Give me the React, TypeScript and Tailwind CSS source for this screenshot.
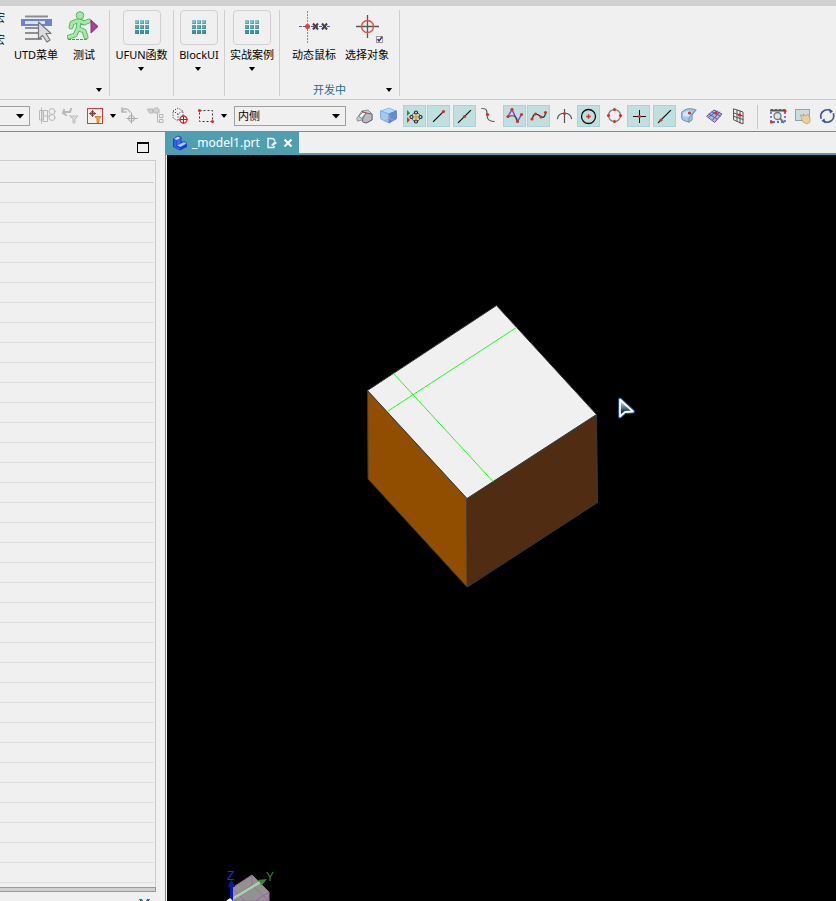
import type { ReactNode } from "react";

function Caret() {
  return (
    <svg width="7" height="4" viewBox="0 0 7 4" className="shrink-0" aria-hidden="true">
      <path d="M0 0h6L3.5 3.5h-1z" fill="#000" />
    </svg>
  );
}

function RibbonTool({ label, children }: { label: string; children: ReactNode }) {
  return (
    <button type="button" className="flex w-12 flex-col items-center">
      <span className="flex h-[37px] w-9 items-start justify-center">{children}</span>
      <span className="text-[11px] leading-4 whitespace-nowrap">{label}</span>
    </button>
  );
}

function RibbonMenu({ label }: { label: string }) {
  return (
    <button type="button" className="flex flex-col items-center">
      <span className="mb-[2px] flex h-[35px] w-[38px] items-center justify-center rounded border border-[#d0d0d0]">
        <GridIcon />
      </span>
      <span className="text-[11px] leading-4 whitespace-nowrap">{label}</span>
      <span className="flex h-3 items-center">
        <Caret />
      </span>
    </button>
  );
}

function GridIcon() {
  const rows = [
    { y: 0, c: "#7fc3ca" },
    { y: 5, c: "#5aa9b2" },
    { y: 10, c: "#45939e" },
  ];
  return (
    <svg width="14" height="15" viewBox="0 0 14 15" aria-hidden="true">
      {rows.map((r) =>
        [0, 5, 10].map((x) => (
          <g key={`${x}-${r.y}`}>
            <rect x={x} y={r.y} width="4" height="4" fill={r.c} />
            <path d={`M${x + 3.5} ${r.y + 1}v2.5h-3`} stroke="#2f7884" fill="none" opacity=".5" />
          </g>
        )),
      )}
    </svg>
  );
}

function MenuCursorIcon() {
  return (
    <svg width="34" height="34" viewBox="0 0 34 34" aria-hidden="true">
      <path d="M6 6.500h23M6 18h14M6 23h14M6 29h17" stroke="#8e8e92" strokeWidth="2" />
      <rect x="2" y="9" width="31" height="7" fill="#6d82d6" />
      <rect x="6" y="11" width="20" height="3" fill="#dfe4f6" />
      <path d="M19.500 12v17l4-3.500 4.500 6.500 3-2-4-6.500h5z" fill="#dcdcdc" stroke="#77777c" strokeWidth="1.200" strokeLinejoin="round" />
    </svg>
  );
}

function RunnerIcon() {
  const limbs = "M13 11L12 19M11 11L6 13 5 17M14 11L18 13 23 11M13 19L18 21 20 27M12 19L9 25 3 27";
  return (
    <svg width="34" height="32" viewBox="1 0 34 32" fill="none" aria-hidden="true">
      <path d="M2 29.500h20" stroke="#777" strokeDasharray="3 1" />
      <g strokeLinecap="round" strokeLinejoin="round">
        <path d={limbs} stroke="#55b866" strokeWidth="5" />
        <path d={limbs} stroke="#a4e9aa" strokeWidth="3" />
      </g>
      <circle cx="14" cy="5.500" r="3.800" fill="#a4e9aa" stroke="#55b866" />
      <path d="M25 10v13l7-6.500z" fill="#b33aa0" stroke="#7d3585" />
    </svg>
  );
}

function MouseIcon() {
  return (
    <svg width="34" height="34" viewBox="0 0 34 34" fill="none" aria-hidden="true">
      <path d="M10.500 1v32" stroke="#8484cc" strokeDasharray="2 1" />
      <path d="M2 16.500h32" stroke="#5454b8" strokeDasharray="3 1" />
      <circle cx="10.500" cy="16.500" r="2.500" fill="#d8403a" />
      <path d="M16 13.500l5 6M21 13.500l-5 6M25 13.500l5 6M30 13.500l-5 6" stroke="#444" strokeWidth="2" />
    </svg>
  );
}

function TargetIcon() {
  return (
    <svg width="34" height="34" viewBox="0 0 34 34" fill="none" aria-hidden="true">
      <path d="M17.500 5v23M6 16.500h23" stroke="#555" strokeWidth="1.300" />
      <circle cx="17.500" cy="16.500" r="6" stroke="#e0524e" strokeWidth="1.500" />
      <rect x="26.500" y="26.500" width="6" height="6" fill="#fff" stroke="#999" />
      <path d="M27.500 29l1.500 2 3-4" stroke="#33339a" strokeWidth="1.600" />
    </svg>
  );
}

const R = "#e02b25";
function Dot({ x, y }: { x: number; y: number }) {
  return <circle cx={x} cy={y} r="1.600" fill={R} />;
}

function ToolIcon({ children }: { children: ReactNode }) {
  return (
    <svg width="21" height="20" viewBox="0 0 21 20" fill="none" strokeLinecap="square" className="shrink-0" aria-hidden="true">
      {children}
    </svg>
  );
}

function Tool({ name, on = false, children }: { name: string; on?: boolean; children: ReactNode }) {
  return (
    <button
      type="button"
      aria-label={name}
      aria-pressed={on}
      className={
        on
          ? "flex h-[22px] w-[23px] shrink-0 items-center justify-center border border-[#a6d3df] bg-[#c0e0df]"
          : "flex h-[22px] w-[23px] shrink-0 items-center justify-center border border-transparent"
      }
    >
      <ToolIcon>{children}</ToolIcon>
    </button>
  );
}

function Pair({ children }: { children: ReactNode }) {
  return <div className="flex gap-px">{children}</div>;
}

function MoreButton({ name }: { name: string }) {
  return (
    <button type="button" aria-label={name} className="flex h-[22px] w-3 shrink-0 items-center justify-center">
      <Caret />
    </button>
  );
}

function SelectArrow() {
  return (
    <span className="pointer-events-none absolute top-2 right-[6px]">
      <svg width="8" height="5" viewBox="0 0 8 5" aria-hidden="true">
        <path d="M0 0h8L4 4.500z" fill="#000" />
      </svg>
    </span>
  );
}

function Toolbar() {
  return (
    <div role="toolbar" className="flex h-8 shrink-0 overflow-hidden border-b border-[#7f8c8c] pt-[5px]">
      <div className="relative mt-px shrink-0">
        <select aria-label="过滤器" className="block h-5 w-[30px] appearance-none border border-l-0 border-[#a0a0a0] text-xs">
          <option></option>
        </select>
        <SelectArrow />
      </div>

      <div className="ml-[6px] flex shrink-0 gap-px">
        <Tool name="装配导航">
          <g stroke="#b9b9b9">
            <path d="M2.500 5v9h4V5zM6.500 4.500h4v11h-4zM4.500 2v15M6.500 10h5" />
            <circle cx="15" cy="5.500" r="3" />
            <circle cx="15" cy="11.500" r="3" />
          </g>
        </Tool>
        <Tool name="重置过滤器">
          <path d="M3 4l-1 3 3 2M3 6h6l1-3" stroke="#b9b9b9" strokeWidth="2" />
          <path d="M9 10h8l-3 3v4h-2v-4z" fill="#dedede" stroke="#bebebe" />
        </Tool>
        <button type="button" aria-label="过滤" className="flex h-[22px] w-[23px] items-center justify-center">
          <svg width="17" height="16" viewBox="0 0 17 16" fill="none" aria-hidden="true">
            <rect x=".5" y=".5" width="15" height="15" stroke="#c54242" fill="#f5f0ee" />
            <circle cx="5.500" cy="5.500" r="2" stroke="#a02020" />
            <path d="M5.500 2v7M2 5.500h7" stroke="#555" />
            <path d="M8 8.500h6l-2 3v3h-2v-3z" fill="#eda23a" stroke="#d88a35" />
          </svg>
        </button>
      </div>
      <MoreButton name="更多过滤" />
      <div className="flex shrink-0 gap-px">
        <div className="flex gap-[3px]">
          <Tool name="撤销选择">
            <path d="M2 2v4h4M2 5c2-3 6-3 8 1" stroke="#b5b5b5" strokeWidth="1.500" />
            <path d="M11.500 7v10M7 12.500h10" stroke="#a8a8a8" />
            <circle cx="11.500" cy="12.500" r="3" stroke="#a8a8a8" />
          </Tool>
          <Tool name="选择树">
            <path d="M2 3h5v4H4zM7 4c2-3 5-3 6 0v3H9z" stroke="#b5b5b5" fill="#d2d2d2" />
            <path d="M11.500 8v8h1M14 8.500h3v3h-3zM14 13.500h3v3h-3z" stroke="#b5b5b5" />
          </Tool>
        </div>
        <div className="flex gap-[3px]">
          <Tool name="选择体">
            <path d="M3 5l5-3 5 3v7l-5 3-5-3zM3 5l5 3 5-3M8 8v7" stroke="#333" strokeDasharray="1 1.500" strokeLinecap="butt" />
            <circle cx="13.500" cy="13.500" r="3.500" fill="#fff" stroke={R} strokeWidth="1.300" />
            <path d="M13.500 10v7M10 13.500h7" stroke="#b32020" />
          </Tool>
          <Tool name="矩形选择">
            <rect x="3.500" y="4.500" width="13" height="11" stroke="#333" strokeDasharray="2 2" strokeLinecap="butt" />
            <Dot x={3.5} y={4.5} />
            <Dot x={16.500} y={15.500} />
          </Tool>
        </div>
      </div>
      <MoreButton name="更多选择" />

      <div className="relative mt-px mr-[7px] ml-1 shrink-0">
        <select aria-label="选择范围" defaultValue="内侧" className="block h-5 w-28 appearance-none border border-[#a0a0a0] px-[3px] text-[11px] leading-[18px]">
          <option>内侧</option>
          <option>外侧</option>
        </select>
        <SelectArrow />
      </div>

      <div className="flex shrink-0 gap-[3px]">
        <Pair>
          <Tool name="面">
            <path d="M3 12l5-7 6-1 4 4v6l-6 3-4-3-4 1z" fill="#c9cbd1" stroke="#8b8e97" />
            <path d="M9 12l3-5 6 1v6l-6 3-3-1z" fill="#b9bcc5" stroke="#666b78" />
            <path d="M5 10l4-4 3 1-4 5z" fill="#f1f2f4" stroke="#8b8e97" />
            <path d="M8 5.500l4 1.500" stroke={R} />
          </Tool>
          <Tool name="实体">
            <path d="M3 5l8-3 7 3-7 3z" fill="#b5dcf7" stroke="#8cbbe6" />
            <path d="M3 5l8 3v9l-8-4z" fill="#9cccf2" stroke="#7eaee0" />
            <path d="M18 5l-7 3v9l7-4z" fill="#5e8ed6" stroke="#6286c9" />
            <path d="M11 9v3l-4 3M11 12l4 2" stroke="#c59abb" />
          </Tool>
        </Pair>
        <Pair>
          <Tool name="启用捕捉点" on>
            <path d="M3 4l3 3-3 3z" fill="#159a2a" />
            <path d="M3 11l3 3-3 3z" fill={R} />
            <circle cx="12" cy="11" r="4.500" stroke="#666" />
            <circle cx="12" cy="11" r="2" fill="#eda527" />
            <g fill="#dcebea" stroke="#222" strokeWidth="1.200">
              <circle cx="12" cy="6.500" r="1.500" />
              <circle cx="12" cy="15.500" r="1.500" />
              <circle cx="7.500" cy="11" r="1.500" />
              <circle cx="16.500" cy="11" r="1.500" />
            </g>
          </Tool>
          <Tool name="端点" on>
            <path d="M5.500 15.500l10-10" stroke="#111" strokeWidth="1.200" />
            <Dot x={15.500} y={5.500} />
          </Tool>
        </Pair>
        <Pair>
          <Tool name="中点" on>
            <path d="M4.500 16.500l12-12" stroke="#111" strokeWidth="1.200" />
            <Dot x={10.500} y={10.500} />
          </Tool>
          <Tool name="控制点">
            <path d="M4 2.500c5 0 5 2 5 6s1 7 7 7" stroke="#555" strokeWidth="1.200" />
            <Dot x={9.500} y={8.500} />
          </Tool>
        </Pair>
        <Pair>
          <Tool name="极点" on>
            <path d="M4 10.500L8 3.500 13.500 15.500 17.500 8.500" stroke="#9b3ed1" strokeWidth="1.500" />
            <path d="M4 10.500c4-1 9-2 9 4" stroke="#333" />
            <Dot x={4} y={10.500} />
            <Dot x={8} y={3.500} />
            <Dot x={13.500} y={15.500} />
            <Dot x={17.500} y={8.500} />
          </Tool>
          <Tool name="样条点" on>
            <path d="M4.500 12.500c1-6 5-5 8-2 3 2 5 0 5-4" stroke="#222" strokeWidth="1.200" />
            <Dot x={4} y={13} />
            <Dot x={7.500} y={8} />
            <Dot x={13} y={11} />
            <Dot x={17.500} y={6.500} />
          </Tool>
        </Pair>
        <Pair>
          <Tool name="交点">
            <path d="M10.500 3.500v13M3.500 12.500c1-7 13-7 14 0" stroke="#555" strokeWidth="1.200" />
            <Dot x={10.500} y={7.500} />
          </Tool>
          <Tool name="圆心" on>
            <circle cx="10.500" cy="10.500" r="7" stroke="#111" strokeWidth="1.300" />
            <path d="M9 10.500h3M10.500 9v3" stroke={R} strokeWidth="1.500" />
          </Tool>
        </Pair>
        <Pair>
          <Tool name="象限点">
            <circle cx="10.500" cy="9.500" r="6" stroke="#777" strokeWidth="1.200" />
            <Dot x={10.500} y={3.500} />
            <Dot x={10.500} y={15.500} />
            <Dot x={4.500} y={9.500} />
            <Dot x={16.500} y={9.500} />
          </Tool>
          <Tool name="现有点" on>
            <path d="M11.500 4.500v12M5.500 10.500h12" stroke="#111" />
            <Dot x={11.500} y={10.500} />
          </Tool>
        </Pair>
        <Pair>
          <Tool name="曲线上的点" on>
            <path d="M4.500 16.500l12-12" stroke="#111" strokeWidth="1.200" />
            <Dot x={7} y={14} />
          </Tool>
          <Tool name="面上的点">
            <path d="M4 6c4-4 9-4 14-2l-4 5v5l-3 2c-3-1-6-1-7-3z" fill="#9fcbed" stroke="#7289ac" />
            <path d="M11 16c-1-5 2-8 7-12" stroke="#7289ac" />
            <path d="M5 7c3-2 6-2 9-1l-3 5-6-1z" fill="#cfe7f9" />
            <Dot x={11.500} y={7} />
          </Tool>
        </Pair>
        <Pair>
          <Tool name="网格点">
            <path d="M3 10l7-6 8 4-7 8z" fill="#b6b6e4" stroke="#55559c" />
            <path d="M5 8l8 5M8 6l8 4M13 5l-8 6M15.500 6l-7 8" stroke="#55559c" />
            <Dot x={12} y={7} />
          </Tool>
          <Tool name="栅格">
            <path d="M6 3l9 3v12l-9-4zM9 4v11M12 5v12M6 7l9 3M6 10.500l9 3" stroke="#555" />
            <Dot x={11.500} y={9} />
          </Tool>
        </Pair>
      </div>

      <div className="mr-2 ml-[7px] h-6 w-px shrink-0 bg-[#c8c8c8]" />

      <div className="flex shrink-0 gap-[2px]">
        <Tool name="缩放窗口">
          <path d="M4 4h14v12H4z" stroke="#2f3fd1" strokeWidth="1.300" strokeDasharray="2 2" strokeLinecap="butt" />
          <path d="M4 4.500h14" stroke="#555" strokeWidth="2" />
          <circle cx="10.500" cy="10" r="3.500" fill="#d9e6ec" stroke="#6d7b84" strokeWidth="1.300" />
          <path d="M13.500 13l3 3" stroke="#6d7b84" strokeWidth="2" />
          <Dot x={18} y={5} />
          <Dot x={4.500} y={16} />
        </Tool>
        <Tool name="平移">
          <rect x="3.500" y="3.500" width="14" height="11" fill="#cfdbe2" stroke="#8fa2ad" />
          <path d="M9 9l3 1-1-2 3 2 2-2 2 4v4l-3 2-4-2z" fill="#e9cf9b" stroke="#b69a68" strokeWidth=".7" />
        </Tool>
        <Tool name="旋转">
          <path d="M4 12A6.500 6.500 0 0 1 14 5M16.500 8A6.500 6.500 0 0 1 6.500 15" stroke="#40549c" strokeWidth="1.600" />
          <path d="M12 2.500l4 3-3 2zM8.500 17.500l-4-3 3-2z" fill="#40549c" />
        </Tool>
      </div>
    </div>
  );
}

function Ribbon() {
  return (
    <div className="flex h-[94px] shrink-0 border-b border-[#cccccc] pt-1">
      <div className="flex h-[86px]">
        <section aria-label="工具" className="flex w-[110px] flex-col border-r border-[#cfcfcf]">
          <div className="flex">
            <div className="flex w-[5px] flex-col items-end gap-[6px] overflow-hidden text-[11px] leading-4">
              <span>宏</span>
              <span>宏</span>
            </div>
            <div className="ml-[7px] flex">
              <RibbonTool label="UTD菜单">
                <MenuCursorIcon />
              </RibbonTool>
              <RibbonTool label="测试">
                <RunnerIcon />
              </RibbonTool>
            </div>
          </div>
          <button type="button" aria-label="工具选项" className="mt-auto flex h-3 w-5 items-center justify-center self-end">
            <Caret />
          </button>
        </section>
        <section aria-label="函数" className="flex w-16 justify-center border-r border-[#cfcfcf]">
          <RibbonMenu label="UFUN函数" />
        </section>
        <section aria-label="界面" className="flex w-[51px] justify-center border-r border-[#cfcfcf]">
          <RibbonMenu label="BlockUI" />
        </section>
        <section aria-label="案例" className="flex w-[55px] justify-center border-r border-[#cfcfcf]">
          <RibbonMenu label="实战案例" />
        </section>
        <section aria-label="开发中" className="flex w-[120px] flex-col border-r border-[#cfcfcf]">
          <div className="flex justify-center gap-[5px] pl-[2px]">
            <RibbonTool label="动态鼠标">
              <MouseIcon />
            </RibbonTool>
            <RibbonTool label="选择对象">
              <TargetIcon />
            </RibbonTool>
          </div>
          <div className="mt-auto flex h-3 items-center">
            <span className="flex-1 text-center text-[11px] leading-3 text-[#1b6c8c]">开发中</span>
            <button type="button" aria-label="开发中选项" className="flex h-3 w-5 items-center justify-center">
              <Caret />
            </button>
          </div>
        </section>
      </div>
    </div>
  );
}

function SidePanel() {
  return (
    <aside className="flex w-[165px] shrink-0 flex-col overflow-hidden">
      <div className="flex h-7 shrink-0 items-center justify-end pt-[2px] pr-4">
        <button type="button" aria-label="最大化" className="h-[11px] w-3 border border-t-2 border-black" />
      </div>
      <div className="mr-[9px] flex flex-1 flex-col border-t border-r border-[#cccccc] pr-px">
        <div className="h-[22px] border-b border-[#cccccc]" />
        {Array.from({ length: 35 }, (_, i) => (
          <div key={i} className="h-5 border-b border-[#dedede]" />
        ))}
      </div>
      <div className="mr-[9px] h-[5px] shrink-0 border border-l-0 border-[#999999] bg-[#d0d0d0]" />
      <div className="flex h-[9px] shrink-0 items-end justify-end overflow-hidden pr-[15px]">
        <svg width="11" height="2" viewBox="0 0 11 2" aria-hidden="true">
          <path d="M0 0h3l1 2H1zM8 0h3l-1 2H7z" fill="#1b6c8c" />
        </svg>
      </div>
    </aside>
  );
}

function PartTab() {
  return (
    <div className="flex h-[23px] shrink-0 border-b-2 border-[#4f9fb0]">
      <div className="flex w-[133px] items-center bg-[#4f9fb0] pl-[6px] text-xs text-white">
        <svg width="16" height="16" viewBox="0 0 16 16" className="mr-1 shrink-0" aria-hidden="true">
          <path d="M1 4l5-3.500L9.500 2v5L12 6l3 2v4l-7 3.500L1 12z" fill="#1c3fc4" />
          <path d="M2 4l4-2.500L8.500 3 5 5z" fill="#cfe0ff" />
          <path d="M5 5l3.500-2v5.500L5 10.500z" fill="#3a6cf0" />
          <path d="M5 10.500l4-2 3-1.500 2.500 1.500-6 3.500z" fill="#a5c6ff" />
          <path d="M2 4.500l2.500 1v6L8 13v2l-6-3z" fill="#2f62ea" />
        </svg>
        <span className="leading-5">_model1.prt</span>
        <svg width="12" height="12" viewBox="0 0 12 12" fill="none" className="ml-[6px] shrink-0" aria-hidden="true">
          <path d="M7 1.500H2v9h6V9M7 1.500L8.500 3v1" stroke="#e8f4f6" strokeWidth="1.500" />
          <path d="M5 8l4-4 2 2-4 3z" fill="#e8f4f6" />
        </svg>
        <button type="button" aria-label="关闭" className="ml-1 flex h-4 w-3 items-center justify-center">
          <svg width="10" height="10" viewBox="0 0 10 10" aria-hidden="true">
            <path d="M1.500 1.500l7 7M8.500 1.500l-7 7" stroke="#fff" strokeWidth="2" />
          </svg>
        </button>
      </div>
    </div>
  );
}

function Viewport() {
  return (
    <div className="relative ml-px flex-1 overflow-hidden bg-black">
      <svg width="250" height="300" viewBox="357 295 250 300" className="absolute top-[140px] left-[190px]" aria-hidden="true">
        <g stroke="#333a3a" strokeLinejoin="round">
          <path d="M367.500 390.500L467 498.500V587L368 479z" fill="#914e00" />
          <path d="M467 498.500L596.500 414.500 597.500 502.500 467.500 587z" fill="#502d12" />
          <path d="M496.500 305.500L596.500 414.500 467 498.500 367.500 390.500z" fill="#f0f0f0" />
        </g>
        <path d="M393.500 373.500L493 481.500M388 411L516.500 327.500" stroke="#1dff1d" />
      </svg>
      <svg width="20" height="24" viewBox="0 0 20 24" className="absolute top-[241px] left-[449px]" aria-hidden="true">
        <defs>
          <linearGradient id="pointer" x1="0" y1="0" x2="0" y2="1">
            <stop offset="0.2" stopColor="#b7c6cf" />
            <stop offset="0.7" stopColor="#0f3a58" />
          </linearGradient>
        </defs>
        <path d="M4 3.500v17l5-4.500 8-.5z" fill="none" stroke="#1d4f8c" strokeWidth="4" strokeLinejoin="round" />
        <path d="M4 3.500v17l5-4.500 8-.5z" fill="url(#pointer)" stroke="#fff" strokeWidth="1.800" strokeLinejoin="round" />
      </svg>
      <svg width="60" height="34" viewBox="222 867 60 34" className="absolute bottom-0 left-[55px]" aria-hidden="true">
        <path d="M232 888l20-13 17 17v9h-37z" fill="#929292" stroke="#9c6a9c" />
        <path d="M252 875v10l17 16M252 885l-20 13M232 888l13 13M269 892l-14 9" stroke="#9c6a9c" fill="none" />
        <path d="M232 899l30-18" stroke="#a5d8a5" strokeWidth="2.500" />
        <path d="M258 880l9-1-5 6z" fill="#2c8d2c" />
        <path d="M231.500 884v17" stroke="#0c16b4" strokeWidth="3" />
        <path d="M231 879l4 8h-7z" fill="#0c16a0" />
        <path d="M226 901l4-3 3 3z" fill="#fff" />
        <text x="227" y="880" fontSize="12" fill="#1a32e6" className="font-['Liberation_Sans',sans-serif]">Z</text>
        <text x="266" y="881" fontSize="12" fill="#2c8d2c" className="font-['Liberation_Sans',sans-serif]">Y</text>
      </svg>
    </div>
  );
}

export default function App() {
  return (
    <div className="flex h-screen flex-col overflow-hidden bg-[#f0f0f0] font-['Noto_Sans','Noto_Sans_CJK_SC',sans-serif] text-black">
      <div className="h-[6px] shrink-0 bg-[#d0d0d0]" />
      <Ribbon />
      <Toolbar />
      <div className="flex min-h-0 flex-1">
        <SidePanel />
        <main className="flex min-w-0 flex-1 flex-col border-l border-[#7f8c8c]">
          <PartTab />
          <Viewport />
        </main>
      </div>
    </div>
  );
}
